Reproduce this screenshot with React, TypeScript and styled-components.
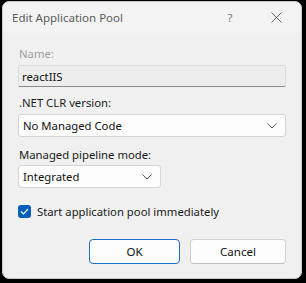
import styled, { createGlobalStyle } from "styled-components";

const GlobalStyle = createGlobalStyle`
  html, body {
    margin: 0;
    padding: 0;
    background: #000;
  }
  body {
    width: 306px;
    height: 283px;
    overflow: hidden;
    font-family: "Noto Sans", "Open Sans", sans-serif;
  }
`;

const Frame = styled.div`
  padding: 1px 4px 4px 2px;
`;

const Window = styled.div`
  width: 300px;
  height: 278px;
  box-sizing: border-box;
  background: #f0f0f0;
  border: 1px solid #c8c8c8;
  border-radius: 7px;
  overflow: hidden;
  display: flex;
  flex-direction: column;
`;

const TitleBar = styled.div`
  height: 31px;
  background: #f3f3f3;
  display: flex;
  align-items: center;
  padding-left: 9px;
  padding-right: 2px;
  color: #5c5c5c;
  font-size: 11.5px;
`;

const Title = styled.span`
  flex: 1;
`;

const TitleButton = styled.div`
  width: 46px;
  height: 31px;
  display: flex;
  align-items: center;
  justify-content: center;
  color: #777;
`;

const Body = styled.div`
  flex: 1;
  display: flex;
  flex-direction: column;
  padding: 13px 15px 0 15px;
  font-size: 11.3px;
  color: #1a1a1a;
`;

const Label = styled.div<{ $disabled?: boolean; $top?: number; $bottom?: number }>`
  color: ${(p) => (p.$disabled ? "#a0a0a0" : "#1a1a1a")};
  margin-top: ${(p) => p.$top ?? 0}px;
  margin-bottom: ${(p) => p.$bottom ?? 3}px;
  line-height: 16px;
  padding-left: 1px;
`;

const TextField = styled.div`
  height: 22px;
  box-sizing: border-box;
  background: #ededed;
  border: 1px solid #dcdcdc;
  border-bottom-color: #8a8a8a;
  border-radius: 2px;
  display: flex;
  align-items: center;
  padding-left: 3px;
  color: #111;
`;

const Select = styled.div<{ $width?: number }>`
  width: ${(p) => (p.$width ? `${p.$width}px` : "auto")};
  height: 23px;
  box-sizing: border-box;
  background: #fdfdfd;
  border: 1px solid #d5d5d5;
  border-radius: 3px;
  display: flex;
  align-items: center;
  padding: 0 8px 0 4px;
  color: #111;
`;

const SelectText = styled.span`
  flex: 1;
`;

const CheckRow = styled.div`
  display: flex;
  align-items: center;
  gap: 6px;
  margin-top: 16px;
`;

const Box = styled.div`
  width: 13px;
  height: 13px;
  border-radius: 3px;
  background: #005fb8;
  display: flex;
  align-items: center;
  justify-content: center;
`;

const Buttons = styled.div`
  display: flex;
  justify-content: flex-end;
  gap: 10px;
  margin-top: 20px;
`;

const Button = styled.button<{ $primary?: boolean; $width: number }>`
  width: ${(p) => p.$width}px;
  height: 25px;
  font-family: inherit;
  font-size: 11.5px;
  color: #111;
  background: #fdfdfd;
  border: 1px solid ${(p) => (p.$primary ? "#1b6fc4" : "#d2d2d2")};
  border-bottom-color: ${(p) => (p.$primary ? "#1b6fc4" : "#bdbdbd")};
  border-radius: 4px;
  padding: 0;
`;

const Chevron = () => (
  <svg width="10" height="6" viewBox="0 0 10 6">
    <path d="M0.5 0.5 L5 5 L9.5 0.5" fill="none" stroke="#555" strokeWidth="1" />
  </svg>
);

export default function App() {
  return (
    <Frame>
      <GlobalStyle />
      <Window>
        <TitleBar>
          <Title>Edit Application Pool</Title>
          <TitleButton>?</TitleButton>
          <TitleButton>
            <svg width="11" height="11" viewBox="0 0 11 11">
              <path d="M0.5 0.5 L10.5 10.5 M10.5 0.5 L0.5 10.5" stroke="#666" strokeWidth="1" />
            </svg>
          </TitleButton>
        </TitleBar>
        <Body>
          <Label $disabled>Name:</Label>
          <TextField>reactIIS</TextField>
          <Label $top={8}>.NET CLR version:</Label>
          <Select>
            <SelectText>No Managed Code</SelectText>
            <Chevron />
          </Select>
          <Label $top={10} $bottom={2}>Managed pipeline mode:</Label>
          <Select $width={143}>
            <SelectText>Integrated</SelectText>
            <Chevron />
          </Select>
          <CheckRow>
            <Box>
              <svg width="9" height="7" viewBox="0 0 9 7">
                <path d="M1 3.5 L3.5 6 L8 1" fill="none" stroke="#fff" strokeWidth="1.2" />
              </svg>
            </Box>
            <span>Start application pool immediately</span>
          </CheckRow>
          <Buttons>
            <Button $primary $width={91}>OK</Button>
            <Button $width={96}>Cancel</Button>
          </Buttons>
        </Body>
      </Window>
    </Frame>
  );
}
